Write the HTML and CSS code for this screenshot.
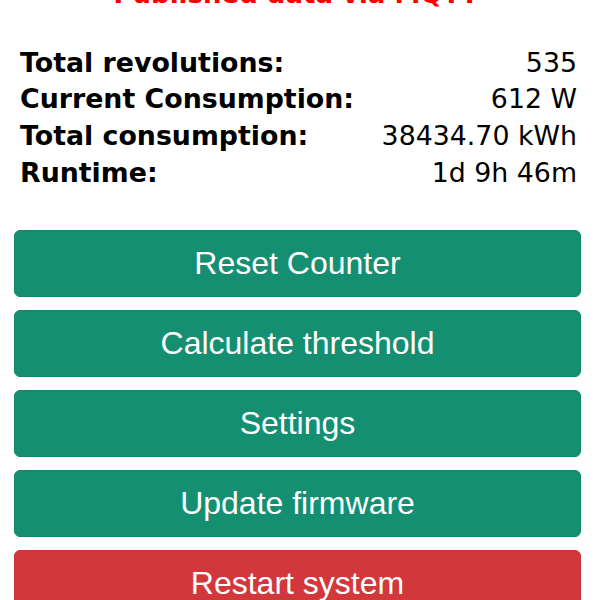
FILE: index.html
```html
<!DOCTYPE html>
<html>
<head>
<meta charset="utf-8">
<link rel="stylesheet" href="styles.css">
</head>
<body>
<div class="page">
  <h1 class="title">Published data via MQTT</h1>
  <table class="stats">
    <tr><td class="label">Total revolutions:</td><td class="value">535</td></tr>
    <tr><td class="label">Current Consumption:</td><td class="value">612 W</td></tr>
    <tr><td class="label">Total consumption:</td><td class="value">38434.70 kWh</td></tr>
    <tr><td class="label">Runtime:</td><td class="value">1d 9h 46m</td></tr>
  </table>
  <div class="actions">
    <button class="btn btn-green">Reset Counter</button>
    <button class="btn btn-green">Calculate threshold</button>
    <button class="btn btn-green">Settings</button>
    <button class="btn btn-green">Update firmware</button>
    <button class="btn btn-red">Restart system</button>
  </div>
</div>
</body>
</html>
```
FILE: styles.css
```css
html, body {
  margin: 0;
  padding: 0;
  background: #ffffff;
  overflow: hidden;
}
.page {
  width: 600px;
  font-family: Verdana, "DejaVu Sans", sans-serif;
}
.title {
  margin: -21.5px 0 0 0;
  width: 592px;
  text-align: center;
  font-size: 26px;
  line-height: 30px;
  font-weight: bold;
  color: #ff0000;
}
.stats {
  margin: 36.1px 0 0 20px;
  width: 557px;
  border-collapse: collapse;
  font-size: 26.8px;
  line-height: 36.7px;
  color: #000000;
}
.stats td {
  padding: 0;
  white-space: nowrap;
}
.label {
  font-weight: bold;
  text-align: left;
}
.value {
  text-align: right;
}
.actions {
  margin: 38.6px 0 0 14px;
  width: 567px;
  display: flex;
  flex-direction: column;
  gap: 13px;
}
.btn {
  display: block;
  width: 100%;
  height: 67px;
  padding: 0;
  border-radius: 6px;
  font-family: "Liberation Sans", Arial, sans-serif;
  font-size: 32px;
  color: #ffffff;
  text-align: center;
}
.btn-green {
  background: #148f72;
  border: 1px solid #10866a;
}
.btn-red {
  background: #d2373c;
  border: 1px solid #c9323a;
}
```
